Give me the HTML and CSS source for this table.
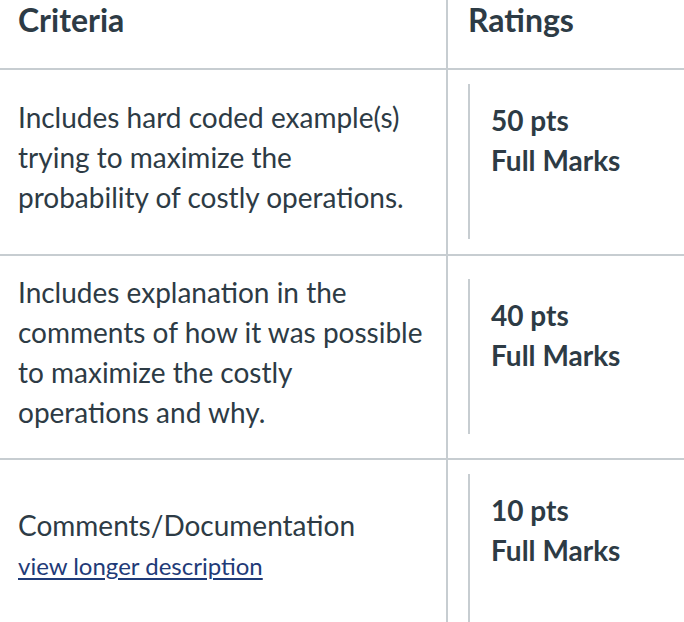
FILE: index.html
```html
<!DOCTYPE html>
<html lang="en">
<head>
<meta charset="utf-8">
<title>Rubric</title>
<link rel="stylesheet" href="styles.css">
</head>
<body>
<div class="rubric">
  <div class="row head">
    <div class="cell crit"><span class="th">Criteria</span></div>
    <div class="cell rate"><span class="th">Ratings</span></div>
  </div>
  <div class="row">
    <div class="cell crit"><div class="desc">Includes hard coded example(s) trying to maximize the probability of costly operations.</div></div>
    <div class="cell rate">
      <div class="tier"><div class="pts">50 pts</div><div class="label">Full Marks</div></div>
    </div>
  </div>
  <div class="row">
    <div class="cell crit"><div class="desc">Includes explanation in the comments of how it was possible to maximize the costly operations and why.</div></div>
    <div class="cell rate">
      <div class="tier"><div class="pts">40 pts</div><div class="label">Full Marks</div></div>
    </div>
  </div>
  <div class="row last">
    <div class="cell crit"><div class="desc">Comments/Documentation</div><a class="more" href="#">view longer description</a></div>
    <div class="cell rate">
      <div class="tier"><div class="pts">10 pts</div><div class="label">Full Marks</div></div>
    </div>
  </div>
</div>
</body>
</html>
```

FILE: styles.css
```css
html, body {
  margin: 0;
  padding: 0;
  background: #fff;
}
body {
  font-family: Lato, "Open Sans", sans-serif;
  color: #2d3b45;
  font-size: 28px;
  line-height: 40px;
}
.rubric {
  width: 684px;
}
.row {
  display: grid;
  grid-template-columns: 448px 1fr;
  border-bottom: 2px solid #c7cdd1;
}
.cell.crit {
  border-right: 2px solid #c7cdd1;
  padding: 16px 22px 26px 18px;
  display: flex;
  flex-direction: column;
  justify-content: center;
  align-items: flex-start;
}
.last .cell.crit {
  padding-bottom: 30px;
}
.cell.rate {
  padding: 14px 0 15px 20px;
  display: flex;
  align-items: center;
}
.head {
  height: 68px;
}
.head .cell.crit,
.head .cell.rate {
  padding: 0 0 0 18px;
  justify-content: flex-start;
  align-items: flex-start;
}
.head .cell.rate {
  padding-left: 20px;
}
.th {
  font-weight: 700;
  font-size: 32px;
  line-height: 40px;
}
.tier {
  border-left: 2px solid #c7cdd1;
  height: 155px;
  box-sizing: border-box;
  padding: 16px 0 0 21px;
}
.pts, .label {
  font-weight: 700;
  font-size: 28px;
}
.more {
  color: #1f3b78;
  font-size: 24px;
  line-height: 40px;
  text-decoration: underline;
  text-underline-offset: 3px;
  text-decoration-thickness: 2px;
  margin-top: 1px;
}
```
